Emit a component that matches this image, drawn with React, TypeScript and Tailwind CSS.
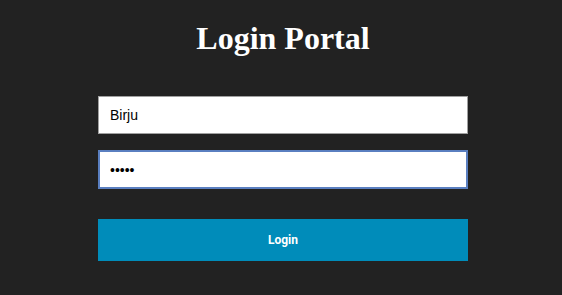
import React from "react";

export default function App() {
  return (
    <div className="min-h-[295px] w-full bg-[#222222] pl-[4px] pt-[20px]">
      <h1 className="text-center font-['Liberation_Serif','Times_New_Roman',serif] text-[32px] font-bold leading-[36px] text-white">
        Login Portal
      </h1>
      <form className="mx-auto mt-[40px] flex w-[370px] flex-col" onSubmit={(e) => e.preventDefault()}>
        <input
          type="text"
          readOnly
          value="Birju"
          className="h-[38px] w-full border border-[#a0a0a0] bg-white px-[11px] font-['Liberation_Sans',Arial,sans-serif] text-[14px] text-black outline-none"
        />
        <input
          type="password"
          readOnly
          value="12345"
          className="mt-[16px] h-[39px] w-full border-2 border-[#5a7fc0] bg-white px-[10px] font-['Liberation_Sans',Arial,sans-serif] text-[14px] text-black outline-none"
        />
        <button
          type="submit"
          className="mt-[30px] h-[42px] w-full bg-[#008cba] font-['Roboto','Liberation_Sans',sans-serif] text-[12px] font-bold text-white"
        >
          Login
        </button>
      </form>
    </div>
  );
}
